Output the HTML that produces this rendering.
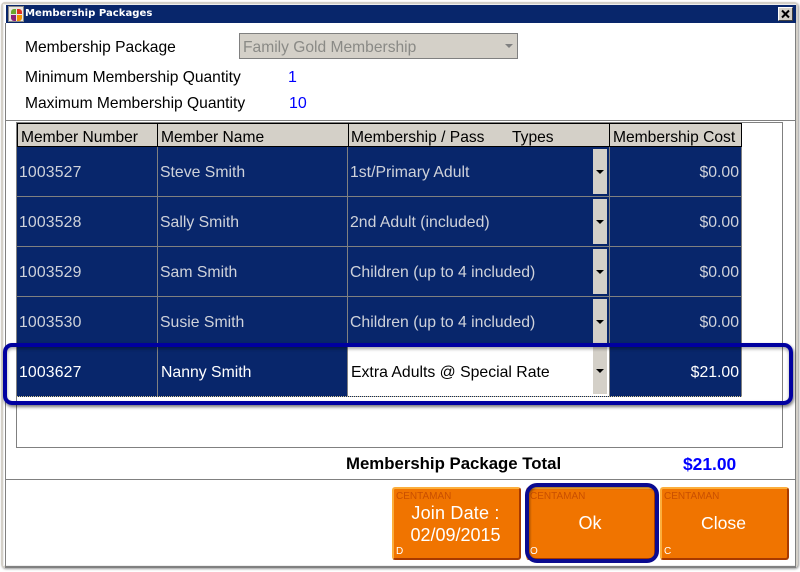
<!DOCTYPE html>
<html><head><meta charset="utf-8">
<style>
html,body{margin:0;padding:0;background:#fff;}
#r{position:relative;width:800px;height:572px;overflow:hidden;background:#fff;font-family:"Liberation Sans",sans-serif;font-size:15.6px;color:#000;}
#r div{position:absolute;box-sizing:border-box;}
.t{white-space:nowrap;line-height:20px;height:20px;margin-top:2px;}
.h{background:#d4d0c8;}
.c{color:#cfd2da;font-size:15.8px;}
.w{color:#fff;font-size:15.8px;}
.b{color:#0000ff;font-size:16px;}
.dd{background:#d4d0c8;width:14px;}
.ar{width:0;height:0;border-left:4px solid transparent;border-right:4px solid transparent;border-top:4px solid #000;}
.btn{background:#f07400;border-radius:3px;border-top:2px solid #fcae3c;border-left:2px solid #fcae3c;border-right:2px solid #a83a00;border-bottom:2px solid #a83a00;}
.cen{color:#c94f00;font-size:10px;line-height:12px;white-space:nowrap;margin-top:2px;}
.k{color:#fff;font-size:10px;line-height:12px;margin-top:2px;}
.bt{color:#fff;font-size:18px;line-height:20px;text-align:center;white-space:nowrap;}
</style></head><body>
<div id="r">
<!-- window frame -->
<div style="left:1px;top:2px;width:797px;height:566px;border:1px solid #d4d0c8;border-radius:4px;background:#d4d0c8;box-shadow:1px 1px 2px #999;"></div>
<div style="left:3px;top:4px;width:793px;height:562px;background:#fff;border:1px solid #eee;"></div>
<div style="left:5px;top:23px;width:1px;height:544px;background:#808080;"></div>
<div style="left:795px;top:23px;width:1px;height:544px;background:#808080;"></div>
<div style="left:5px;top:566px;width:791px;height:2px;background:#808080;"></div>
<!-- title -->
<div style="left:6px;top:5px;width:790px;height:18px;background:#08266b;"></div>
<div style="left:8px;top:6px;width:16px;height:16px;background:#e8e6e2;border:1px solid #888;"></div>
<div style="left:11px;top:9px;width:5px;height:5px;background:#6aa52e;border-top-left-radius:3px;"></div>
<div style="left:17px;top:9px;width:5px;height:5px;background:#e03020;border-top-right-radius:3px;"></div>
<div style="left:11px;top:15px;width:5px;height:6px;background:#8a1f78;border-bottom-left-radius:3px;"></div>
<div style="left:17px;top:15px;width:5px;height:6px;background:#f09000;border-bottom-right-radius:3px;"></div>
<div style="left:25px;top:5px;height:18px;line-height:18px;font-family:'DejaVu Sans',sans-serif;font-weight:bold;font-size:10.1px;color:#fff;white-space:nowrap;">Membership Packages</div>
<div style="left:778px;top:7px;width:15px;height:14px;background:#d4d0c8;border:1px solid;border-color:#fff #404040 #404040 #fff;"></div>
<svg style="position:absolute;left:778px;top:7px" width="15" height="14"><path d="M4 3.5L11 10.5M11 3.5L4 10.5" stroke="#000" stroke-width="2" fill="none"/></svg>
<!-- top labels -->
<div class="t" style="left:25px;top:36px;">Membership Package</div>
<div class="t" style="left:25px;top:66px;">Minimum Membership Quantity</div>
<div class="t" style="left:25px;top:92px;">Maximum Membership Quantity</div>
<div class="t b" style="left:288px;top:66px;">1</div>
<div class="t b" style="left:289px;top:92px;">10</div>
<div style="left:239px;top:33px;width:279px;height:26px;background:#d4d0c8;border:1px solid #808080;"></div>
<div class="t" style="left:243px;top:36px;color:#8a8a86;">Family Gold Membership</div>
<div class="ar" style="left:505px;top:44px;border-top-color:#808080;"></div>
<div style="left:6px;top:120px;width:789px;height:1px;background:#808080;"></div>
<!-- grid container -->
<div style="left:16px;top:122px;width:767px;height:326px;border:1px solid #808080;background:#fff;"></div>
<!-- header -->
<div class="h" style="left:17px;top:123px;width:725px;height:24px;border:1px solid #000;"></div>
<div style="left:157px;top:123px;width:1px;height:24px;background:#000;"></div>
<div style="left:348px;top:123px;width:1px;height:24px;background:#000;"></div>
<div style="left:609px;top:123px;width:1px;height:24px;background:#000;"></div>
<div class="t" style="left:21px;top:126px;">Member Number</div>
<div class="t" style="left:161px;top:126px;">Member Name</div>
<div class="t" style="left:351px;top:126px;">Membership / Pass</div>
<div class="t" style="left:512px;top:126px;">Types</div>
<div class="t" style="left:613px;top:126px;">Membership Cost</div>
<!-- body -->
<div style="left:17px;top:147px;width:725px;height:250px;background:#08266b;"></div>
<div style="left:17px;top:196px;width:725px;height:1px;background:#808080;"></div>
<div style="left:17px;top:246px;width:725px;height:1px;background:#808080;"></div>
<div style="left:17px;top:296px;width:725px;height:1px;background:#808080;"></div>
<div style="left:17px;top:346px;width:725px;height:1px;background:#808080;"></div>
<div style="left:157px;top:147px;width:1px;height:250px;background:#808080;"></div>
<div style="left:347px;top:147px;width:1px;height:250px;background:#808080;"></div>
<div style="left:609px;top:147px;width:1px;height:250px;background:#808080;"></div>
<div style="left:741px;top:147px;width:1px;height:250px;background:#808080;"></div>
<!-- rows -->
<div class="t c" style="left:19px;top:161px;letter-spacing:.15px;">1003527</div><div class="t c" style="left:160px;top:161px;">Steve Smith</div><div class="t c" style="left:350px;top:161px;">1st/Primary Adult</div><div class="t c" style="right:61px;top:161px;">$0.00</div>
<div class="dd" style="left:593px;top:149px;height:45px;"></div><div class="ar" style="left:596px;top:170px;"></div>
<div class="t c" style="left:19px;top:211px;letter-spacing:.15px;">1003528</div><div class="t c" style="left:160px;top:211px;">Sally Smith</div><div class="t c" style="left:350px;top:211px;">2nd Adult (included)</div><div class="t c" style="right:61px;top:211px;">$0.00</div>
<div class="dd" style="left:593px;top:199px;height:45px;"></div><div class="ar" style="left:596px;top:220px;"></div>
<div class="t c" style="left:19px;top:261px;letter-spacing:.15px;">1003529</div><div class="t c" style="left:160px;top:261px;">Sam Smith</div><div class="t c" style="left:350px;top:261px;">Children (up to 4 included)</div><div class="t c" style="right:61px;top:261px;">$0.00</div>
<div class="dd" style="left:593px;top:249px;height:45px;"></div><div class="ar" style="left:596px;top:270px;"></div>
<div class="t c" style="left:19px;top:311px;letter-spacing:.15px;">1003530</div><div class="t c" style="left:160px;top:311px;">Susie Smith</div><div class="t c" style="left:350px;top:311px;">Children (up to 4 included)</div><div class="t c" style="right:61px;top:311px;">$0.00</div>
<div class="dd" style="left:593px;top:299px;height:45px;"></div><div class="ar" style="left:596px;top:320px;"></div>
<!-- selected row -->
<div style="left:348px;top:347px;width:261px;height:49px;background:#fff;"></div>
<div style="left:17px;top:395px;width:725px;height:2px;border-bottom:1px dotted #d8c890;"></div>
<div class="t w" style="left:19px;top:361px;letter-spacing:.15px;">1003627</div><div class="t w" style="left:161px;top:361px;">Nanny Smith</div><div class="t" style="left:351px;top:361px;font-size:15.8px;">Extra Adults @ Special Rate</div><div class="t w" style="right:61px;top:361px;">$21.00</div>
<div class="dd" style="left:593px;top:347px;height:47px;"></div><div class="ar" style="left:596px;top:369px;"></div>
<!-- highlight -->
<div style="left:3px;top:343px;width:790px;height:62px;border:4px solid #0000a0;border-radius:9px;box-shadow:1px 2px 3px rgba(0,0,0,.55),inset 0 2px 3px rgba(0,0,0,.35);"></div>
<!-- total -->
<div class="t" style="left:346px;top:452px;font-weight:bold;font-size:16.8px;">Membership Package Total</div>
<div class="t b" style="left:683px;top:452px;font-weight:bold;font-size:17.4px;">$21.00</div>
<div style="left:6px;top:479px;width:789px;height:1px;background:#808080;"></div>
<!-- buttons -->
<div class="btn" style="left:392px;top:487px;width:129px;height:73px;"></div>
<div class="cen" style="left:396px;top:489px;">CENTAMAN</div>
<div class="bt" style="left:391px;top:503px;width:129px;letter-spacing:.2px;">Join Date :</div>
<div class="bt" style="left:391px;top:525px;width:129px;">02/09/2015</div>
<div class="k" style="left:396px;top:544px;">D</div>
<div class="btn" style="left:526px;top:487px;width:130px;height:73px;"></div>
<div class="cen" style="left:530px;top:489px;">CENTAMAN</div>
<div class="bt" style="left:525px;top:513px;width:130px;">Ok</div>
<div class="k" style="left:530px;top:544px;">O</div>
<div style="left:525px;top:483px;width:134px;height:80px;border:4px solid #0a0a90;border-radius:12px;box-shadow:inset 1px 1px 2px rgba(0,0,0,.4);"></div>
<div class="btn" style="left:660px;top:487px;width:129px;height:73px;"></div>
<div class="cen" style="left:664px;top:489px;">CENTAMAN</div>
<div class="bt" style="left:660px;top:513px;width:127px;font-size:17.6px;">Close</div>
<div class="k" style="left:664px;top:544px;">C</div>
</div>
</body></html>
